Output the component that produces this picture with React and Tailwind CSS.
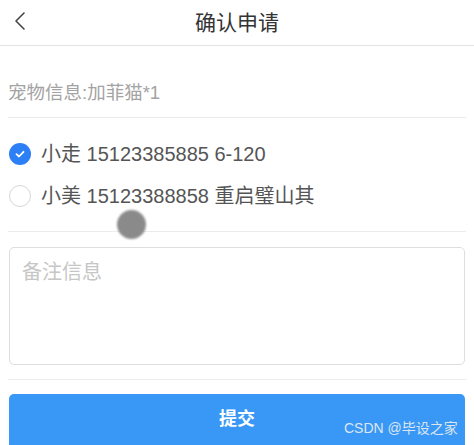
import React, { useState } from "react";

const FONT = { fontFamily: '"Liberation Sans", "Noto Sans CJK SC", sans-serif' };

function Radio({ checked }) {
  if (checked) {
    return (
      <span className="flex h-[22px] w-[22px] flex-none items-center justify-center rounded-full bg-[#2d7ff5]">
        <svg width="12" height="12" viewBox="0 0 12 12" fill="none">
          <path d="M2.5 6.2 L5 8.5 L9.5 3.8" stroke="#fff" strokeWidth="1.8" strokeLinecap="round" strokeLinejoin="round" />
        </svg>
      </span>
    );
  }
  return <span className="h-[22px] w-[22px] flex-none rounded-full border border-[#d6d6d6] bg-white" />;
}

export default function App() {
  const [picked, setPicked] = useState(0);
  const addresses = [
    { id: 0, text: "小走 15123385885 6-120" },
    { id: 1, text: "小美 15123388858 重启璧山其" },
  ];

  return (
    <div className="relative h-[445px] w-[474px] overflow-hidden bg-white" style={FONT}>
      {/* header */}
      <div className="relative flex h-[46px] items-center justify-center border-b border-[#e3e3e3]">
        <svg className="absolute left-[13px] top-[11px]" width="14" height="20" viewBox="0 0 14 20" fill="none">
          <path d="M11 2 L3 10 L11 18" stroke="#444" strokeWidth="1.6" strokeLinecap="round" strokeLinejoin="round" />
        </svg>
        <span className="text-[21px] text-[#333]">确认申请</span>
      </div>

      {/* pet info */}
      <div className="mx-[8px] border-b border-[#ececec] pb-[12px] pt-[35px]">
        <div className="text-[18.5px] leading-[24px] text-[#a3a3a3]">宠物信息:加菲猫*1</div>
      </div>

      {/* address list */}
      <div className="mx-[8px] flex flex-col gap-[14px] border-b border-[#ececec] pb-[21px] pt-[22px]">
        {addresses.map((a) => (
          <button
            key={a.id}
            onClick={() => setPicked(a.id)}
            className="flex h-[28px] items-center gap-[10px] pl-[1px] text-left"
          >
            <Radio checked={picked === a.id} />
            <span className="text-[20px] text-[#555]">{a.text}</span>
          </button>
        ))}
      </div>

      {/* remark */}
      <div className="px-[9px] pt-[15px]">
        <div className="h-[118px] rounded-[5px] border border-[#dedede] px-[12px] pt-[10px]">
          <div className="text-[20px] leading-[28px] text-[#c6c6c6]">备注信息</div>
        </div>
      </div>
      <div className="mx-[8px] mt-[14px] border-b border-[#ececec]" />

      {/* submit */}
      <div className="px-[9px] pt-[14px]">
        <button className="flex h-[56px] w-full items-start justify-center rounded-[5px] bg-[#3998f6] pt-[12px] text-[18px] font-bold text-white">
          提交
        </button>
      </div>

      {/* touch indicator */}
      <div className="absolute left-[117px] top-[210px] h-[29px] w-[29px] rounded-full bg-[#8a8a8a] blur-[1px]" />

      {/* watermark */}
      <div className="absolute left-[344px] top-[418px] text-[14px] text-[#dce6f0]">CSDN @毕设之家</div>
    </div>
  );
}
